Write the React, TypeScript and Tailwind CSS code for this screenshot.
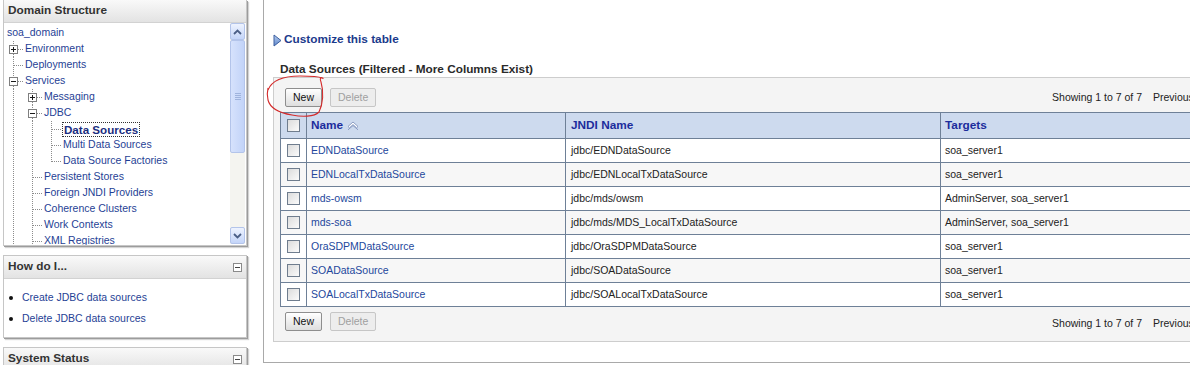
import React from "react";

type Cell = "pipe" | "tee" | "elbow" | "plus" | "minus";

const DOT = "#8c8c8c";

function TreeCell({ kind }: { kind: Cell }) {
  const box = kind === "plus" || kind === "minus";
  return (
    <svg width="19" height="16" viewBox="0 0 19 16" className="shrink-0">
      {(kind === "pipe" || kind === "tee") && (
        <line x1="9.5" y1="0" x2="9.5" y2="16" stroke={DOT} strokeDasharray="1 1" />
      )}
      {kind === "elbow" && <line x1="9.5" y1="0" x2="9.5" y2="9" stroke={DOT} strokeDasharray="1 1" />}
      {(kind === "tee" || kind === "elbow") && (
        <line x1="10" y1="8.5" x2="19" y2="8.5" stroke={DOT} strokeDasharray="1 1" />
      )}
      {box && (
        <>
          <line x1="9.5" y1="0" x2="9.5" y2="4" stroke={DOT} strokeDasharray="1 1" />
          <line x1="9.5" y1="13" x2="9.5" y2="16" stroke={DOT} strokeDasharray="1 1" />
          <line x1="14" y1="8.5" x2="19" y2="8.5" stroke={DOT} strokeDasharray="1 1" />
          <rect x="5.5" y="4.5" width="8" height="8" fill="#fff" stroke="#7f7f7f" />
          <line x1="7" y1="8.5" x2="12" y2="8.5" stroke="#1a1a1a" />
          {kind === "plus" && <line x1="9.5" y1="6" x2="9.5" y2="11" stroke="#1a1a1a" />}
        </>
      )}
    </svg>
  );
}

const tree: { label: string; cells: Cell[]; bold?: boolean }[] = [
  { label: "Environment", cells: ["plus"] },
  { label: "Deployments", cells: ["tee"] },
  { label: "Services", cells: ["minus"] },
  { label: "Messaging", cells: ["pipe", "plus"] },
  { label: "JDBC", cells: ["pipe", "minus"] },
  { label: "Data Sources", cells: ["pipe", "pipe", "tee"], bold: true },
  { label: "Multi Data Sources", cells: ["pipe", "pipe", "tee"] },
  { label: "Data Source Factories", cells: ["pipe", "pipe", "elbow"] },
  { label: "Persistent Stores", cells: ["pipe", "tee"] },
  { label: "Foreign JNDI Providers", cells: ["pipe", "tee"] },
  { label: "Coherence Clusters", cells: ["pipe", "tee"] },
  { label: "Work Contexts", cells: ["pipe", "tee"] },
  { label: "XML Registries", cells: ["pipe", "tee"] },
];

const sources = [
  ["EDNDataSource", "jdbc/EDNDataSource", "soa_server1"],
  ["EDNLocalTxDataSource", "jdbc/EDNLocalTxDataSource", "soa_server1"],
  ["mds-owsm", "jdbc/mds/owsm", "AdminServer, soa_server1"],
  ["mds-soa", "jdbc/mds/MDS_LocalTxDataSource", "AdminServer, soa_server1"],
  ["OraSDPMDataSource", "jdbc/OraSDPMDataSource", "soa_server1"],
  ["SOADataSource", "jdbc/SOADataSource", "soa_server1"],
  ["SOALocalTxDataSource", "jdbc/SOALocalTxDataSource", "soa_server1"],
];

function Chevron({ up }: { up?: boolean }) {
  return (
    <svg width="9" height="6" viewBox="0 0 9 6">
      <polyline
        points={up ? "1,5 4.5,1.5 8,5" : "1,1 4.5,4.5 8,1"}
        fill="none"
        stroke="#4b5f86"
        strokeWidth="1.8"
      />
    </svg>
  );
}

function Scrollbar() {
  const btn =
    "h-[17px] rounded-[2px] border border-[#b3c4ea] bg-gradient-to-b from-[#eef3fe] to-[#c4d5f9] flex items-center justify-center";
  return (
    <div className="w-[15px] mr-[1px] flex flex-col bg-[#f4f4f0]">
      <div className={btn}>
        <Chevron up />
      </div>
      <div className="h-[113px] rounded-[2px] border border-[#b3c4ea] bg-gradient-to-r from-[#d6e2fc] to-[#c2d3f8] flex flex-col items-center justify-center gap-[1px]">
        <div className="w-[6px] h-[1px] bg-[#9fb3dc]" />
        <div className="w-[6px] h-[1px] bg-[#9fb3dc]" />
        <div className="w-[6px] h-[1px] bg-[#9fb3dc]" />
        <div className="w-[6px] h-[1px] bg-[#9fb3dc]" />
      </div>
      <div className="flex-1" />
      <div className={btn}>
        <Chevron />
      </div>
    </div>
  );
}

function CollapseIcon() {
  return (
    <svg width="9" height="9" viewBox="0 0 9 9">
      <rect x="0.5" y="0.5" width="8" height="8" fill="#fff" stroke="#8a8a8a" />
      <line x1="2" y1="4.5" x2="7" y2="4.5" stroke="#444" />
    </svg>
  );
}

function PanelHeader({ title, collapse }: { title: string; collapse?: boolean }) {
  return (
    <div className="h-[23px] flex items-center justify-between pl-[4px] pr-[4px] bg-gradient-to-b from-[#f9f9f9] to-[#e3e3e3] border-b border-[#d2d2d2]">
      <span className="text-[11.8px] font-bold text-[#333]">{title}</span>
      {collapse && <CollapseIcon />}
    </div>
  );
}

function Checkbox() {
  return (
    <div className="w-[13px] h-[13px] border border-[#6f7d8e] bg-gradient-to-br from-[#dcdcdc] to-[#fbfbfb]" />
  );
}

function Button({ label, disabled }: { label: string; disabled?: boolean }) {
  return (
    <div
      className={
        disabled
          ? "h-[19px] px-[7px] flex items-center rounded-[2px] border border-[#c6c6c6] bg-[#ededed] text-[#a0a0a0]"
          : "h-[19px] px-[7px] flex items-center rounded-[2px] border border-[#8e8e8e] bg-gradient-to-b from-[#ffffff] to-[#dedede] text-[#111]"
      }
    >
      {label}
    </div>
  );
}

function Toolbar({ top }: { top?: boolean }) {
  return (
    <div className={top ? "h-[34px] pt-[10px] pl-[11px] pr-[9px] flex items-start" : "h-[34px] pt-[5px] pl-[11px] pr-[9px] flex items-start"}>
      <div className="flex gap-[8px]">
        <Button label="New" />
        <Button label="Delete" disabled />
      </div>
      <div className={top ? "ml-auto flex gap-[11px] text-[#222] pt-[2px]" : "ml-auto flex gap-[11px] text-[#222] pt-[4px]"}>
        <span>Showing 1 to 7 of 7</span>
        <span>Previous | Next</span>
      </div>
    </div>
  );
}

export default function App() {
  return (
    <div className="relative w-[1190px] h-[365px] overflow-hidden bg-white flex font-['Liberation_Sans',Arial,sans-serif] text-[10.5px]">
      {/* left column */}
      <div className="w-[249px] shrink-0 pl-[3px] flex flex-col">
        <div className="w-[244px] border border-t-0 border-[#c6c6c6] shadow-[1px_1px_0_#9c9c9c,2px_2px_1px_#d4d4d4]">
          <PanelHeader title="Domain Structure" />
          <div className="h-[222px] flex">
            <div className="flex-1 overflow-hidden pt-[2px]">
              <div className="h-[16px] flex items-center pl-[3px] text-[#1f3f95]">soa_domain</div>
              {tree.map((r) => (
                <div key={r.label} className="h-[16px] flex items-center whitespace-nowrap">
                  {r.cells.map((c, i) => (
                    <TreeCell key={i} kind={c} />
                  ))}
                  {r.bold ? (
                    <span className="ml-[1px] px-[1px] border border-dotted border-[#333] leading-[13px] text-[11.6px] font-bold text-[#1a2d7e]">
                      {r.label}
                    </span>
                  ) : (
                    <span className="ml-[2px] text-[#1f3f95]">{r.label}</span>
                  )}
                </div>
              ))}
            </div>
            <div className="pb-[1px] flex">
              <Scrollbar />
            </div>
          </div>
        </div>

        <div className="mt-[9px] w-[244px] border border-[#c6c6c6] shadow-[1px_1px_0_#9c9c9c,2px_2px_1px_#d4d4d4]">
          <PanelHeader title="How do I..." collapse />
          <ul className="pt-[8px] pb-[8px] pl-[5px]">
            {["Create JDBC data sources", "Delete JDBC data sources"].map((t) => (
              <li key={t} className="h-[21px] flex items-center">
                <span className="w-[4px] h-[4px] rounded-full bg-[#111]" />
                <span className="ml-[9px] text-[#1f3f95]">{t}</span>
              </li>
            ))}
          </ul>
        </div>

        <div className="mt-[9px] w-[244px] border border-[#c6c6c6] shadow-[1px_1px_0_#9c9c9c,2px_2px_1px_#d4d4d4]">
          <PanelHeader title="System Status" collapse />
          <div className="h-[40px]" />
        </div>
      </div>

      {/* right frame */}
      <div className="ml-[14px] flex-1 h-[363px] border-l border-b border-[#a9a9a9] overflow-hidden pl-[9px] pt-[33px]">
        <div className="h-[14px] flex items-center gap-[2px]">
          <svg width="9" height="13" viewBox="0 0 9 13">
            <defs>
              <linearGradient id="tri" x1="0" y1="0" x2="0" y2="1">
                <stop offset="0" stopColor="#b7cdf0" />
                <stop offset="1" stopColor="#5d86c9" />
              </linearGradient>
            </defs>
            <polygon points="1,1 8,6.5 1,12" fill="url(#tri)" stroke="#3c5f9f" strokeLinejoin="round" />
          </svg>
          <span className="text-[11.8px] font-bold text-[#1b3a8c]">Customize this table</span>
        </div>
        <div className="mt-[15px] h-[15px] pl-[7px] flex items-center text-[11.8px] font-bold text-[#2a2a2a]">
          Data Sources (Filtered - More Columns Exist)
        </div>
        <div className="w-[960px] bg-[#f4f4f4] border-t border-l border-b border-[#cdcdcd]">
          <Toolbar top />
          <div className="ml-[6px] border-t border-l border-[#6e8097] bg-white">
            <div className="flex h-[26px] bg-[#cddaee]">
              <div className="w-[26px] border-r border-b border-[#6e8097] flex items-center pl-[6px]">
                <Checkbox />
              </div>
              <div className="w-[259px] border-r border-b border-[#6e8097] flex items-center gap-[4px] pl-[4px] text-[11.8px] font-bold text-[#1c2c9c]">
                Name
                <svg width="12" height="10" viewBox="0 0 12 10">
                  <path d="M1 5.5 L6 1 L11 5.5 L9.5 6.8 L6 3.6 L2.5 6.8 Z" fill="#fff" stroke="#8294bd" strokeWidth="0.9" />
                  <path d="M1 8.8 L6 4.6 L11 8.8" fill="none" stroke="#8294bd" strokeWidth="0.9" />
                </svg>
              </div>
              <div className="w-[375px] border-r border-b border-[#6e8097] flex items-center pl-[5px] text-[11.8px] font-bold text-[#1c2c9c]">
                JNDI Name
              </div>
              <div className="flex-1 border-b border-[#6e8097] flex items-center pl-[4px] text-[11.8px] font-bold text-[#1c2c9c]">
                Targets
              </div>
            </div>
            {sources.map((s, i) => (
              <div key={s[0]} className={i % 2 === 1 ? "flex h-[24px] bg-[#f7f7f7]" : "flex h-[24px] bg-white"}>
                <div className="w-[26px] border-r border-b border-[#6e8097] flex items-center pl-[6px]">
                  <Checkbox />
                </div>
                <div className="w-[259px] border-r border-b border-[#6e8097] flex items-center pl-[4px] text-[#23479c]">
                  {s[0]}
                </div>
                <div className="w-[375px] border-r border-b border-[#6e8097] flex items-center pl-[5px] text-[#222]">
                  {s[1]}
                </div>
                <div className="flex-1 border-b border-[#6e8097] flex items-center pl-[4px] text-[#222]">{s[2]}</div>
              </div>
            ))}
          </div>
          <Toolbar />
        </div>
      </div>

      {/* hand-drawn red annotation */}
      <svg className="absolute left-0 top-0 pointer-events-none" width="1190" height="365" viewBox="0 0 1190 365">
        <path
          d="M268 90 C272 80 285 76 300 76 C310 76 318 76 322 78 C326 80 318 74 321 82 C324 92 323 104 319 112 C314 117 302 117 292 115 C280 113 270 108 268 100 C267 95 267 92 268 88"
          fill="none"
          stroke="#d42b2b"
          strokeWidth="1.1"
        />
      </svg>
    </div>
  );
}
